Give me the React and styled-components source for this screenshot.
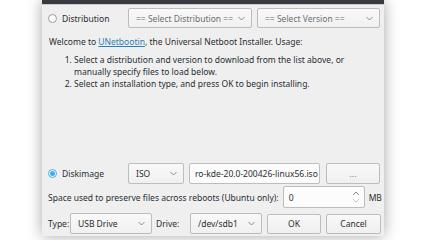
import React from 'react';
import styled, { createGlobalStyle } from 'styled-components';

const GlobalStyle = createGlobalStyle`
  html, body {
    margin: 0;
    padding: 0;
    background: #ffffff;
    font-family: 'Noto Sans', 'DejaVu Sans', sans-serif;
    font-size: 8.5px;
    color: #2a2e32;
  }
`;

const Stage = styled.div`
  width: 427px;
  height: 240px;
  overflow: hidden;
  background: #ffffff;
`;

const Window = styled.div`
  margin-left: 42px;
  width: 342px;
  height: 236px;
  background: #efefef;
  box-shadow: 0 0 14px rgba(0, 0, 0, 0.35);
  display: flex;
  flex-direction: column;
  box-sizing: border-box;
`;

const TitleBar = styled.div`
  height: 4px;
  background: #373b40;
  border-bottom: 1px solid #c9c9c9;
`;

const Body = styled.div`
  flex: 1;
  display: flex;
  flex-direction: column;
  padding: 3px 4px 2px 6px;
`;

const Row = styled.div`
  display: flex;
  align-items: center;
  gap: ${(p) => p.gap || 5}px;
  height: ${(p) => p.h || 20}px;
  margin-top: ${(p) => p.mt || 0}px;
`;

const RadioLabel = styled.label`
  display: flex;
  align-items: center;
  gap: 5px;
  width: 75px;
  white-space: nowrap;
`;

const RadioDot = styled.span`
  width: 9px;
  height: 9px;
  border-radius: 50%;
  box-sizing: border-box;
  border: 1px solid ${(p) => (p.checked ? '#3daee9' : '#9a9a9a')};
  background: #fcfcfc;
  display: flex;
  align-items: center;
  justify-content: center;
  &::after {
    content: '';
    width: 5px;
    height: 5px;
    border-radius: 50%;
    background: ${(p) => (p.checked ? '#3daee9' : 'transparent')};
  }
`;

const Combo = styled.div`
  width: ${(p) => p.w}px;
  height: ${(p) => p.h || 20}px;
  flex: none;
  box-sizing: border-box;
  border: 1px solid #bdbdbd;
  border-radius: 2px;
  background: linear-gradient(#f9f9f9, #f0f0f0);
  display: flex;
  align-items: center;
  justify-content: space-between;
  padding: 0 6px 0 ${(p) => p.pl || 7}px;
  white-space: nowrap;
  color: ${(p) => (p.muted ? '#6b6f73' : '#2a2e32')};
`;

const Chevron = () => (
  <svg width="7" height="5" viewBox="0 0 7 5">
    <path d="M0.5 1 L3.5 4 L6.5 1" fill="none" stroke="#7c7f82" strokeWidth="0.9" />
  </svg>
);

const Intro = styled.div`
  margin-top: 8px;
  padding-left: 1px;
  line-height: 12px;
`;

const Link = styled.a`
  color: #2980b9;
  text-decoration: underline;
`;

const Steps = styled.ol`
  margin: 6px 0 0 0;
  padding-left: 26px;
  line-height: 12px;
  li {
    padding-left: 0;
  }
`;

const Spacer = styled.div`
  flex: 1;
`;

const TextField = styled.div`
  width: ${(p) => p.w}px;
  height: ${(p) => p.h || 21}px;
  flex: none;
  box-sizing: border-box;
  border: 1px solid #bdbdbd;
  border-radius: 2px;
  background: #fcfcfc;
  display: flex;
  align-items: center;
  justify-content: space-between;
  padding: 0 4px 0 5px;
  overflow: hidden;
  white-space: nowrap;
`;

const Button = styled.div`
  width: ${(p) => p.w}px;
  height: ${(p) => p.h || 20}px;
  flex: none;
  margin-left: ${(p) => p.ml || 0}px;
  box-sizing: border-box;
  border: 1px solid #bdbdbd;
  border-radius: 2px;
  background: linear-gradient(#f9f9f9, #efefef);
  display: flex;
  align-items: center;
  justify-content: center;
  color: ${(p) => (p.muted ? '#7a7d80' : '#2a2e32')};
`;

const Label = styled.span`
  white-space: nowrap;
  flex: none;
  width: ${(p) => (p.w ? `${p.w}px` : 'auto')};
`;

const SpinArrows = () => (
  <svg width="8" height="14" viewBox="0 0 8 14">
    <path d="M1 5 L4 2 L7 5" fill="none" stroke="#7c7f82" strokeWidth="0.9" />
    <path d="M1 9 L4 12 L7 9" fill="none" stroke="#c2c4c6" strokeWidth="0.9" />
  </svg>
);

export default function App() {
  return (
    <Stage>
      <GlobalStyle />
      <Window>
        <TitleBar />
        <Body>
          <Row>
            <RadioLabel>
              <RadioDot />
              Distribution
            </RadioLabel>
            <Combo w={124} muted>
              == Select Distribution ==
              <Chevron />
            </Combo>
            <Combo w={123} muted>
              == Select Version ==
              <Chevron />
            </Combo>
          </Row>
          <Intro>
            Welcome to <Link>UNetbootin</Link>, the Universal Netboot Installer. Usage:
          </Intro>
          <Steps>
            <li>
              Select a distribution and version to download from the list above, or
              <br />
              manually specify files to load below.
            </li>
            <li>Select an installation type, and press OK to begin installing.</li>
          </Steps>
          <Spacer />
          <Row h={21}>
            <RadioLabel>
              <RadioDot checked />
              Diskimage
            </RadioLabel>
            <Combo w={56} h={21}>
              ISO
              <Chevron />
            </Combo>
            <TextField w={131}>ro-kde-20.0-200426-linux56.iso</TextField>
            <Button w={54} h={21} ml={1} muted>...</Button>
          </Row>
          <Row h={22} mt={2} gap={4}>
            <Label>Space used to preserve files across reboots (Ubuntu only):</Label>
            <TextField w={82} h={22}>
              0
              <SpinArrows />
            </TextField>
            <Label>MB</Label>
          </Row>
          <Row h={21} mt={5} gap={4}>
            <Label w={18}>Type:</Label>
            <Combo w={82} h={21}>
              USB Drive
              <Chevron />
            </Combo>
            <Label w={30}>Drive:</Label>
            <Combo w={72} h={21}>
              /dev/sdb1
              <Chevron />
            </Combo>
            <Button w={54} h={20} ml={1}>OK</Button>
            <Button w={55} h={20} ml={1}>Cancel</Button>
          </Row>
        </Body>
      </Window>
    </Stage>
  );
}
